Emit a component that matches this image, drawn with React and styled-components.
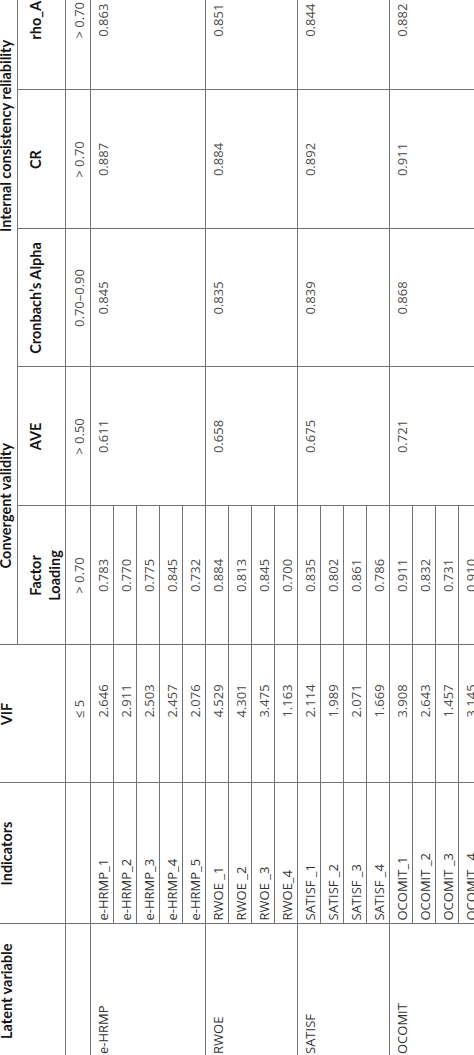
import React from 'react';
import styled, { createGlobalStyle } from 'styled-components';

const GlobalStyle = createGlobalStyle`
  html, body {
    margin: 0;
    padding: 0;
    background: #ffffff;
  }
`;

const COLS = [134, 141, 138, 139, 139, 138, 139, 139];
const TOTAL = COLS.reduce((a, b) => a + b, 0);

const groups = [
  {
    name: 'e-HRMP',
    ave: '0.611',
    alpha: '0.845',
    cr: '0.887',
    rho: '0.863',
    items: [
      ['e-HRMP_1', '2.646', '0.783'],
      ['e-HRMP_2', '2.911', '0.770'],
      ['e-HRMP_3', '2.503', '0.775'],
      ['e-HRMP_4', '2.457', '0.845'],
      ['e-HRMP_5', '2.076', '0.732'],
    ],
  },
  {
    name: 'RWOE',
    ave: '0.658',
    alpha: '0.835',
    cr: '0.884',
    rho: '0.851',
    items: [
      ['RWOE _1', '4.529', '0.884'],
      ['RWOE _2', '4.301', '0.813'],
      ['RWOE _3', '3.475', '0.845'],
      ['RWOE_4', '1.163', '0.700'],
    ],
  },
  {
    name: 'SATISF',
    ave: '0.675',
    alpha: '0.839',
    cr: '0.892',
    rho: '0.844',
    items: [
      ['SATISF _1', '2.114', '0.835'],
      ['SATISF _2', '1.989', '0.802'],
      ['SATISF _3', '2.071', '0.861'],
      ['SATISF _4', '1.669', '0.786'],
    ],
  },
  {
    name: 'OCOMIT',
    ave: '0.721',
    alpha: '0.868',
    cr: '0.911',
    rho: '0.882',
    items: [
      ['OCOMIT_1', '3.908', '0.911'],
      ['OCOMIT _2', '2.643', '0.832'],
      ['OCOMIT _3', '1.457', '0.731'],
      ['OCOMIT _4', '3.145', '0.910'],
    ],
  },
];

const LINE = '1px solid #737373';

const Frame = styled.div`
  width: 474px;
  height: 1055px;
  overflow: hidden;
  background: #ffffff;
`;

// the page shows the table turned a quarter turn anticlockwise
const Turned = styled.div`
  width: ${TOTAL}px;
  transform-origin: top left;
  transform: translate(-3px, 1058px) rotate(-90deg);
`;

const Table = styled.table`
  border-collapse: collapse;
  table-layout: fixed;
  width: ${TOTAL}px;
  font-family: 'Open Sans', 'DejaVu Sans', sans-serif;
  color: #4a4a4a;
`;

const Col = styled.col`
  width: ${(p) => p.$w}px;
`;

const HeadCell = styled.th`
  font-family: Lato, 'Open Sans', sans-serif;
  font-weight: 700;
  font-size: 14.5px;
  line-height: 19px;
  color: #141414;
  text-align: center;
  vertical-align: top;
  padding: ${(p) => (p.$low ? '8px 4px 0' : '0 4px')};
  border-right: ${(p) => (p.$last ? 'none' : LINE)};
  border-bottom: ${LINE};
`;

const GroupHead = styled.th`
  font-family: Lato, 'Open Sans', sans-serif;
  font-weight: 700;
  font-size: 14.5px;
  line-height: 17px;
  color: #141414;
  text-align: center;
  vertical-align: top;
  height: 20px;
  padding: 0 0 0 ${(p) => p.$shift || 0}px;
  border-bottom: ${LINE};
  border-right: none;
`;

const HeadRow = styled.tr`
  height: ${(p) => p.$h}px;
`;

const CritRow = styled.tr`
  height: 25px;
`;

const CritCell = styled.td`
  padding: 1px 0 0 ${(p) => p.$nudge || 0}px;
  font-size: 13px;
  line-height: 16px;
  text-align: center;
  vertical-align: middle;
  border-right: ${(p) => (p.$last ? 'none' : LINE)};
  border-bottom: ${LINE};
`;

const DataRow = styled.tr`
  height: 23px;
`;

const Cell = styled.td`
  padding: 2px 0 0 ${(p) => (p.$left ? 3 : p.$nudge || 0)}px;
  font-size: 13px;
  line-height: 16px;
  white-space: nowrap;
  text-align: ${(p) => (p.$left ? 'left' : 'center')};
  vertical-align: middle;
  border-right: ${LINE};
  border-top: ${LINE};
`;

const SpanCell = styled.td`
  padding: 4px 0 0 ${(p) => (p.$left ? '4px' : '0')};
  font-size: 13px;
  line-height: 16px;
  white-space: nowrap;
  text-align: ${(p) => (p.$left ? 'left' : 'center')};
  vertical-align: top;
  color: ${(p) => (p.$left ? '#333' : 'inherit')};
  border-right: ${(p) => (p.$last ? 'none' : LINE)};
  border-top: ${LINE};
`;

const Name = styled.span`
  color: #333;
`;

const Group = ({ g }) =>
  g.items.map((it, i) => (
    <DataRow key={it[0]}>
      {i === 0 && (
        <SpanCell rowSpan={g.items.length} $left>
          {g.name}
        </SpanCell>
      )}
      <Cell $left>
        <Name>{it[0]}</Name>
      </Cell>
      <Cell $nudge={26}>{it[1]}</Cell>
      <Cell>{it[2]}</Cell>
      {i === 0 && (
        <>
          <SpanCell rowSpan={g.items.length}>{g.ave}</SpanCell>
          <SpanCell rowSpan={g.items.length}>{g.alpha}</SpanCell>
          <SpanCell rowSpan={g.items.length}>{g.cr}</SpanCell>
          <SpanCell rowSpan={g.items.length} $last>
            {g.rho}
          </SpanCell>
        </>
      )}
    </DataRow>
  ));

export default function App() {
  return (
    <Frame>
      <GlobalStyle />
      <Turned>
        <Table>
          <colgroup>
            {COLS.map((w, i) => (
              <Col key={i} $w={w} />
            ))}
          </colgroup>
          <thead>
            <HeadRow $h={20}>
              <HeadCell rowSpan={2}>Latent variable</HeadCell>
              <HeadCell rowSpan={2}>Indicators</HeadCell>
              <HeadCell rowSpan={2}>VIF</HeadCell>
              <GroupHead colSpan={2}>Convergent validity</GroupHead>
              <GroupHead colSpan={3} $shift={46}>
                Internal consistency reliability
              </GroupHead>
            </HeadRow>
            <HeadRow $h={48}>
              <HeadCell $low>
                Factor
                <br />
                Loading
              </HeadCell>
              <HeadCell $low>AVE</HeadCell>
              <HeadCell $low>Cronbach’s Alpha</HeadCell>
              <HeadCell $low>CR</HeadCell>
              <HeadCell $low $last>
                rho_A
              </HeadCell>
            </HeadRow>
          </thead>
          <tbody>
            <CritRow>
              <CritCell />
              <CritCell />
              <CritCell $nudge={10}>≤ 5</CritCell>
              <CritCell>&gt; 0.70</CritCell>
              <CritCell>&gt; 0.50</CritCell>
              <CritCell>0.70–0.90</CritCell>
              <CritCell>&gt; 0.70</CritCell>
              <CritCell $last>&gt; 0.70</CritCell>
            </CritRow>
            {groups.map((g) => (
              <Group key={g.name} g={g} />
            ))}
          </tbody>
        </Table>
      </Turned>
    </Frame>
  );
}
